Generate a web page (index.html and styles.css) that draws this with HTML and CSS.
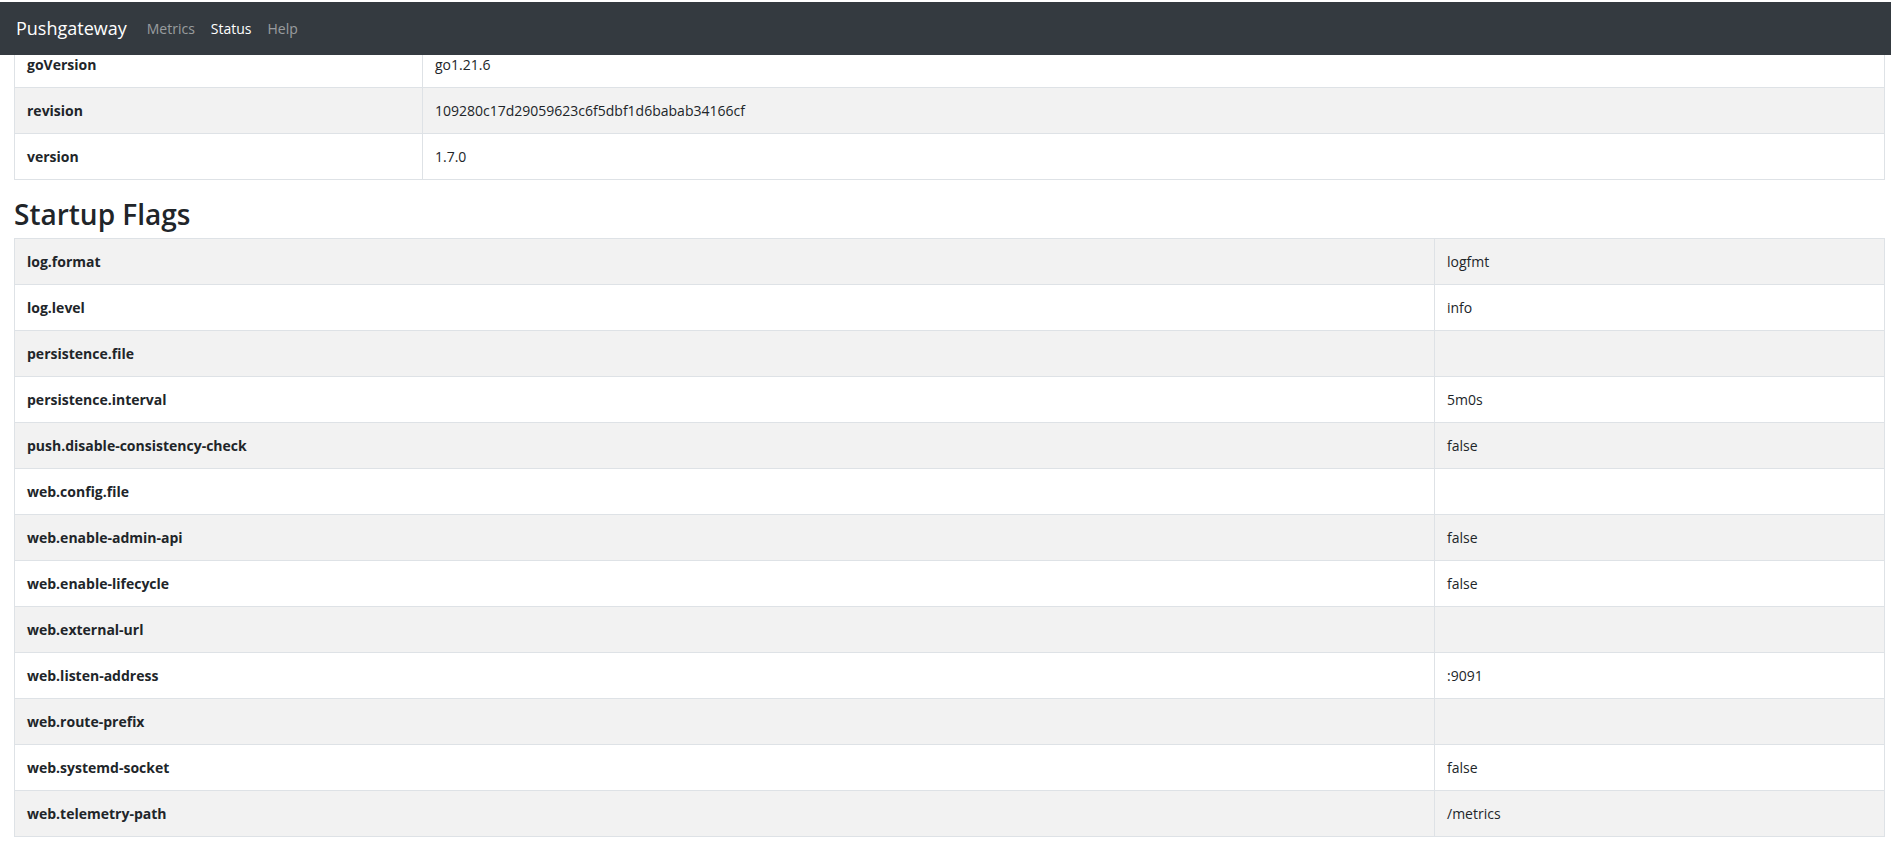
FILE: index.html
```html
<!DOCTYPE html>
<html lang="en">
<head>
<meta charset="utf-8">
<title>Pushgateway</title>
<link rel="stylesheet" href="styles.css">
</head>
<body>
<nav class="navbar">
  <a class="brand" href="#">Pushgateway</a>
  <ul class="nav">
    <li><a class="nav-link" href="#">Metrics</a></li>
    <li><a class="nav-link active" href="#">Status</a></li>
    <li><a class="nav-link" href="#">Help</a></li>
  </ul>
</nav>
<main class="content">
  <table class="table build-info">
    <colgroup><col class="key-col"><col></colgroup>
    <tbody>
      <tr><th>goVersion</th><td>go1.21.6</td></tr>
      <tr><th>revision</th><td>109280c17d29059623c6f5dbf1d6babab34166cf</td></tr>
      <tr><th>version</th><td>1.7.0</td></tr>
    </tbody>
  </table>
  <h2 class="section-title">Startup Flags</h2>
  <table class="table flags">
    <colgroup><col><col class="val-col"></colgroup>
    <tbody>
      <tr><th>log.format</th><td>logfmt</td></tr>
      <tr><th>log.level</th><td>info</td></tr>
      <tr><th>persistence.file</th><td></td></tr>
      <tr><th>persistence.interval</th><td>5m0s</td></tr>
      <tr><th>push.disable-consistency-check</th><td>false</td></tr>
      <tr><th>web.config.file</th><td></td></tr>
      <tr><th>web.enable-admin-api</th><td>false</td></tr>
      <tr><th>web.enable-lifecycle</th><td>false</td></tr>
      <tr><th>web.external-url</th><td></td></tr>
      <tr><th>web.listen-address</th><td>:9091</td></tr>
      <tr><th>web.route-prefix</th><td></td></tr>
      <tr><th>web.systemd-socket</th><td>false</td></tr>
      <tr><th>web.telemetry-path</th><td>/metrics</td></tr>
    </tbody>
  </table>
</main>
</body>
</html>
```
FILE: styles.css
```css
html, body {
  margin: 0;
  padding: 0;
  background: #fff;
}
body {
  font-family: "Open Sans", "Noto Sans", sans-serif;
  font-size: 14px;
  line-height: 21px;
  color: #212529;
  overflow: hidden;
  height: 853px;
}
.navbar {
  position: fixed;
  top: 2px;
  left: 0;
  right: 0;
  height: 53px;
  z-index: 10;
  background: #343a40;
  display: flex;
  align-items: center;
  padding: 0 16px;
  box-sizing: border-box;
}
.brand {
  color: #fff;
  text-decoration: none;
  font-size: 18px;
  line-height: 27px;
  margin-right: 12px;
}
.nav {
  display: flex;
  list-style: none;
  margin: 0;
  padding: 0;
}
.nav-link {
  display: block;
  padding: 0 8px;
  color: rgba(255, 255, 255, 0.5);
  text-decoration: none;
  font-size: 14px;
}
.nav-link.active {
  color: #fff;
}
.content {
  padding: 41px 6px 0 14px;
}
.table {
  width: 100%;
  border-collapse: collapse;
  margin-bottom: 17px;
}
.table th,
.table td {
  border: 1px solid #dee2e6;
  padding: 12px;
  text-align: left;
  vertical-align: top;
}
.table th {
  font-weight: 700;
}
.table td {
  font-weight: 400;
}
.table tbody tr:nth-of-type(odd) {
  background: #f2f2f2;
}
.build-info tbody tr:nth-of-type(odd) {
  background: #fff;
}
.build-info tbody tr:nth-of-type(even) {
  background: #f2f2f2;
}
.build-info .key-col {
  width: 408px;
}
.flags .val-col {
  width: 450px;
}
.section-title {
  font-size: 28px;
  line-height: 34px;
  font-weight: 600;
  margin: 0 0 7px;
}
```
